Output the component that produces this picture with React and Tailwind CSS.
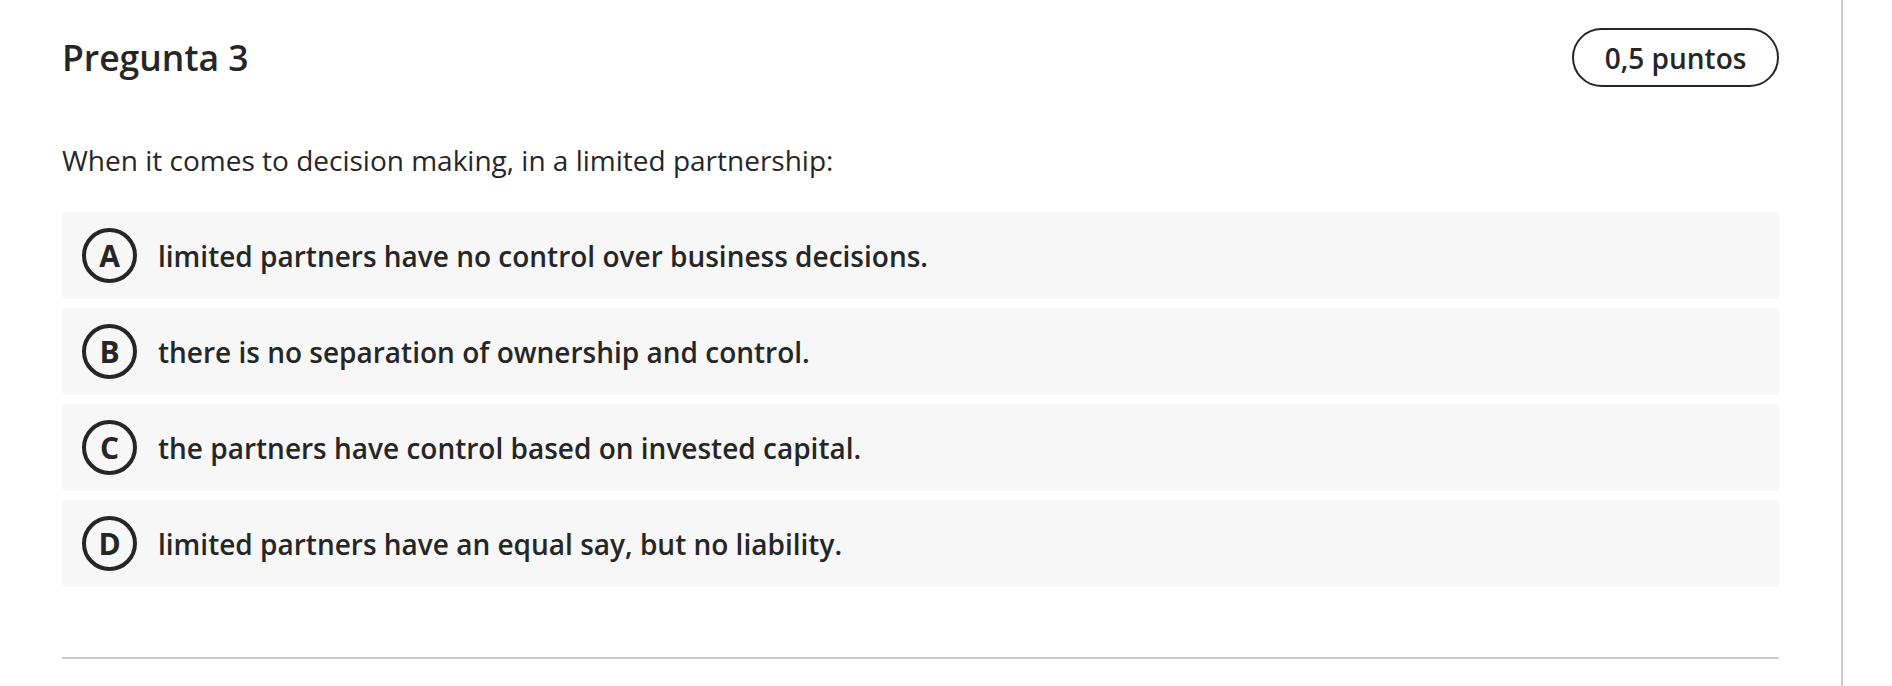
import React from "react";

const options = [
  { letter: "A", text: "limited partners have no control over business decisions." },
  { letter: "B", text: "there is no separation of ownership and control." },
  { letter: "C", text: "the partners have control based on invested capital." },
  { letter: "D", text: "limited partners have an equal say, but no liability." },
];

export default function App() {
  return (
    <div
      className="flex h-[686px] w-[1892px] bg-white text-[#262626] overflow-hidden"
      style={{ fontFamily: '"Open Sans", "Noto Sans", sans-serif' }}
    >
      <div className="w-[1841px] shrink-0 px-[62px] pt-[28px]">
        <div className="flex items-center justify-between h-[59px]">
          <h2 className="text-[35.5px] leading-none font-semibold">Pregunta 3</h2>
          <div className="h-[59px] w-[207px] flex items-center justify-center rounded-full border-2 border-[#262626] text-[28px] font-semibold leading-none">
            0,5 puntos
          </div>
        </div>
        <p className="mt-[53px] text-[28px] leading-[40px]">
          When it comes to decision making, in a limited partnership:
        </p>
        <div className="mt-[32px] flex flex-col gap-[9px]">
          {options.map((o) => (
            <div
              key={o.letter}
              className="h-[87px] flex items-center gap-[21px] px-[20px] bg-[#f7f7f7] rounded-[4px]"
            >
              <div className="w-[55px] h-[55px] shrink-0 rounded-full border-[4px] border-[#262626] flex items-center justify-center text-[30px] font-bold leading-none">
                {o.letter}
              </div>
              <span className="text-[28px] font-semibold leading-none">{o.text}</span>
            </div>
          ))}
        </div>
        <div className="mt-[70px] h-[2px] bg-[#cccccc]" />
      </div>
      <div className="w-[2px] h-full bg-[#cccccc] shrink-0" />
    </div>
  );
}
